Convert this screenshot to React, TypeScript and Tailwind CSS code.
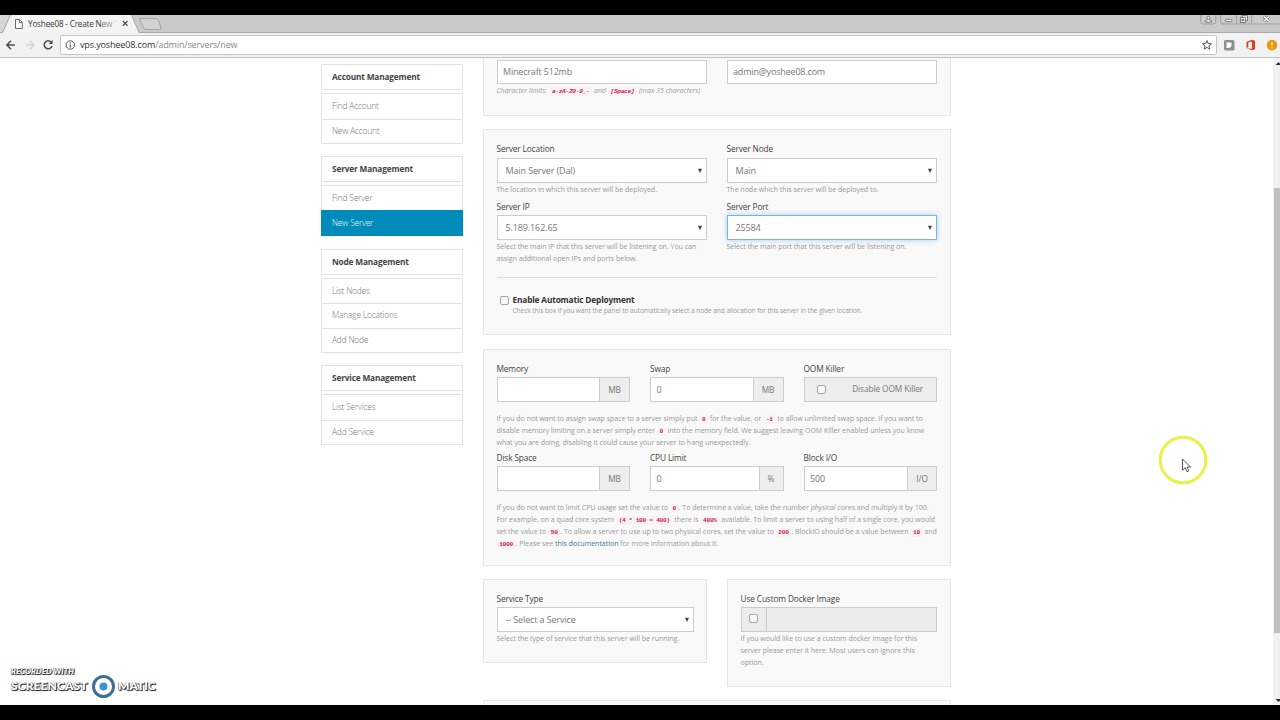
import type { ReactNode } from "react";

const cx = (...c: (string | undefined | false)[]) => c.filter(Boolean).join(" ");

function Chrome() {
  return (
    <header className="shrink-0">
      <div className="relative flex h-[18px] bg-[#cacaca]">
        <svg width="170" height="18" viewBox="0 0 170 18" className="shrink-0">
          <path d="M0 0H10L2 18H0Z" fill="#d6d6d6" />
          <path d="M2.5 18L10.5 0H131.5L139 18Z" fill="#f4f4f4" />
          <path d="M0 17.5H2.5L10.5 0M131.5 0L139 17.5H170" fill="none" stroke="#a9a9a9" />
          <path d="M139.5 3.5H156Q158 3.5 158.6 5.5L161 13Q161.500 14.500 160 14.500H146Q144 14.500 143.200 12.500Z" fill="#d2d2d2" stroke="#a6a6a6" />
          <path d="M15.500 4.500H19.500L22.300 7.300V13.500H15.500ZM19.300 4.500V7.500H22.300" fill="#fff" stroke="#6b6b6b" />
          <path d="M122.800 6L127.500 10.800M127.500 6L122.800 10.800" stroke="#555" strokeWidth="1.300" />
        </svg>
        <div className="absolute left-[28px] top-[2px] whitespace-nowrap text-[8.2px] leading-[13px] tracking-[-0.2px] text-[#3c3c3c]">
          Yoshee08 - Create N<span className="text-[#777]">e</span><span className="text-[#999]">w</span> <span className="text-[#d5d5d5]">'</span>
        </div>
        <div className="grow border-b border-[#a9a9a9]" />
        <svg width="84" height="18" viewBox="0 0 84 18" className="shrink-0 border-b border-[#a9a9a9]">
          <path d="M-1 0V7.500Q-1 9.500 1 9.500H13Q15 9.500 15 7.500V0M20 0V7.500Q20 9.500 22 9.500H84M37 0V9M53 0V9" transform="translate(3.500 0)" fill="none" stroke="#9c9c9c" />
          <g fill="#fff" stroke="#666" strokeWidth=".9">
            <circle cx="10.700" cy="3" r="1.600" />
            <path d="M7.500 7.500V6Q10.700 3.500 14 6V7.500Z" />
            <rect x="28.500" y="4.500" width="7" height="2.500" rx="1" />
            <rect x="46.500" y=".8" width="5.500" height="5" />
            <rect x="44.500" y="2.800" width="5.500" height="5" />
            <rect x="46.300" y="4.600" width="1.800" height="1.500" />
          </g>
          <path d="M68.500 1.500L73.500 6.500M73.500 1.500L68.500 6.500" transform="translate(1 0)" stroke="#666" strokeWidth="3" />
          <path d="M68.500 1.500L73.500 6.500M73.500 1.500L68.500 6.500" transform="translate(1 0)" stroke="#fff" strokeWidth="1.500" />
        </svg>
      </div>
      <div className="flex h-[25px] items-start border-b border-[#c3c3c3] bg-[#f2f2f2]">
        <svg width="60" height="24" viewBox="0 0 60 24" fill="none" strokeWidth="1.500" className="shrink-0">
          <path d="M15 12H7M11 7.800L6.800 12L11 16.200" stroke="#4d4d4d" />
          <path d="M26 12H33.500M30 8L34 12L30 16" stroke="#d0d0d0" />
          <path d="M51.300 9.200A4 4 0 1 0 52 13" stroke="#4d4d4d" />
          <path d="M52.600 7V11H48.600Z" fill="#4d4d4d" />
        </svg>
        <div className="mt-[2px] flex h-[20px] w-[1157px] items-center rounded-[2px] border border-[#c6c6c6] bg-white">
          <svg width="19" height="18" viewBox="0 0 19 18" className="shrink-0" fill="none" stroke="#555">
            <circle cx="9.300" cy="9" r="4.200" />
            <path d="M9.300 8.400V11.400M9.300 6.400V7.400" strokeWidth="1.200" />
          </svg>
          <span className="text-[9px] leading-[16px] tracking-[-0.13px] text-[#8a8a8a]">
            <span className="text-[#333]">vps.yoshee08.com</span>/admin/servers/new
          </span>
          <svg width="12" height="12" viewBox="0 0 12 12" className="ml-auto mr-[3px]" fill="none" stroke="#5a5a5a">
            <path d="M6 1.500L7.200 4.600L10.500 4.800L7.900 6.900L8.800 10.200L6 8.400L3.200 10.200L4.100 6.900L1.500 4.800L4.800 4.600Z" />
          </svg>
        </div>
        <svg width="63" height="24" viewBox="0 0 63 24" className="shrink-0">
          <rect x="7" y="7" width="10.500" height="10.500" rx="1.500" fill="#8e8e8e" />
          <path d="M9.500 9.500H14.500V12.500Q14 15 11 15H9.500Z" fill="#fff" />
          <path d="M29.500 9L35 6.800L38 7.800V16.300L35 17.300L29.500 15.200L35 15.800V8.600L31.300 9.500V14.300L29.500 15Z" fill="#d8401f" />
          <circle cx="55" cy="12" r="5.300" fill="#e8990f" />
          <path d="M55 9V12.500M55 14V15.200" stroke="#fbe7b8" strokeWidth="1.400" />
        </svg>
      </div>
    </header>
  );
}

const groups = [
  { title: "Account Management", items: ["Find Account", "New Account"] },
  { title: "Server Management", items: ["Find Server", "New Server"] },
  { title: "Node Management", items: ["List Nodes", "Manage Locations", "Add Node"] },
  { title: "Service Management", items: ["List Services", "Add Service"] },
];

function Sidebar() {
  return (
    <nav className="flex w-[142px] shrink-0 flex-col gap-[12.300px] pt-[6px]">
      {groups.map((g) => (
        <div key={g.title}>
          <div className="mb-[3px] h-[26px] border border-[#e2e2e2] px-[10px] text-[8.3px] font-bold leading-[24px] tracking-[-0.17px] text-[#444]">
            {g.title}
          </div>
          <div className="flex flex-col border border-[#e2e2e2]">
            {g.items.map((t, i) => (
              <div
                key={t}
                className={cx(
                  "text-[8.4px] font-light tracking-[-0.18px]",
                  t === "New Server"
                    ? "-m-px h-[26.500px] border border-[#008cba] bg-[#008cba] px-[10px] leading-[23.500px] text-[#eef9fd]"
                    : "h-[24.500px] px-[10px] text-[#777]",
                  i > 0 && t !== "New Server" && "border-t border-[#e2e2e2] leading-[22px]",
                  i === 0 && "leading-[23px]",
                )}
              >
                {t}
              </div>
            ))}
          </div>
        </div>
      ))}
    </nav>
  );
}

const Label = ({ children, tight }: { children: ReactNode; tight?: boolean }) => (
  <div
    className={cx(
      "h-[12px] whitespace-nowrap text-[8.3px] leading-[12px] tracking-[-0.13px] text-[#444]",
      tight ? "mb-[2px]" : "mb-[3px]",
    )}
  >
    {children}
  </div>
);

const Line = ({ children, className }: { children?: ReactNode; className?: string }) => (
  <div className={cx("h-[12px] whitespace-nowrap leading-[12px] text-[#999]", className ?? "text-[7.1px] tracking-[-0.055px]")}>
    {children}
  </div>
);

const Code = ({ children }: { children: ReactNode }) => (
  <code className="rounded-[2px] bg-[#f9f2f4] px-[2.700px] py-[1px] font-['Liberation_Mono'] text-[6.2px] font-bold tracking-[-0.3px] text-[#c7254e]">
    {children}
  </code>
);

function Select({ value, focus }: { value: string; focus?: boolean }) {
  return (
    <div
      className={cx(
        "flex h-[25px] items-center justify-between border bg-white pl-[8px] pr-[3px] text-[9px] tracking-[-0.12px] text-[#777]",
        focus ? "border-[#78b3e4] shadow-[0_0_5px_rgba(102,175,233,.6)]" : "border-[#ccc]",
      )}
    >
      {value}
      <svg width="6" height="6" viewBox="0 0 6 6">
        <path d="M1 .8H5L3 5Z" fill="#444" />
      </svg>
    </div>
  );
}

const Input = ({ value }: { value: string }) => (
  <div className="h-[24px] border border-[#ccc] bg-white px-[5.500px] text-[9px] leading-[22px] tracking-[-0.18px] text-[#777]">{value}</div>
);

function Group({ label, value, unit, unitWidth }: { label: string; value: string; unit: string; unitWidth: string }) {
  return (
    <div className="w-[133.500px]">
      <Label tight>{label}</Label>
      <div className="flex h-[25px] border border-[#ccc] bg-white text-[9px] leading-[23px] tracking-[-0.1px] text-[#777]">
        <div className="grow pl-[5.500px]">{value}</div>
        <div className={cx("border-l border-[#ccc] bg-[#eee] text-center text-[8.3px]", unitWidth)}>{unit}</div>
      </div>
    </div>
  );
}

const Box = ({ className }: { className?: string }) => (
  <div className={cx("h-[9px] w-[9px] rounded-[2px] border border-[#a5a5a5] bg-[#f8f8f8]", className)} />
);

const panel = "border border-[#e6e6e6] bg-[#f9f9f9] px-[12.500px]";

function Form() {
  return (
    <main className="flex w-[468px] shrink-0 flex-col">
      <section className={cx(panel, "flex h-[58px] shrink-0 gap-[20px] border-t-0 pt-[2px]")}>
        <div className="w-[210px]">
          <Input value="Minecraft 512mb" />
          <Line className="mt-px text-[7px] italic">
            Character limits: <Code>a-zA-Z0-9_-</Code> and <Code>[Space]</Code> (max 35 characters)
          </Line>
        </div>
        <div className="w-[210px]">
          <Input value="admin@yoshee08.com" />
        </div>
      </section>

      <section className={cx(panel, "mt-[13px] h-[206px] shrink-0 pt-[13px]")}>
        <div className="flex gap-[20px]">
          <div className="w-[210px]">
            <Label>Server Location</Label>
            <Select value="Main Server (Dal)" />
            <Line>The location in which this server will be deployed.</Line>
            <div className="pt-[6px]">
              <Label tight>Server IP</Label>
              <Select value="5.189.162.65" />
              <Line>Select the main IP that this server will be listening on. You can</Line>
              <Line>assign additional open IPs and ports below.</Line>
            </div>
          </div>
          <div className="w-[210px]">
            <Label>Server Node</Label>
            <Select value="Main" />
            <Line>The node which this server will be deployed to.</Line>
            <div className="pt-[6px]">
              <Label tight>Server Port</Label>
              <Select value="25584" focus />
              <Line>Select the main port that this server will be listening on.</Line>
            </div>
          </div>
        </div>
        <hr className="mt-[13px] w-[440px] border-[#ddd]" />
        <div className="mt-[15px] flex">
          <Box className="ml-[3px] mr-[4px] mt-[3px]" />
          <div>
            <div className="h-[12px] text-[8.3px] font-bold leading-[14px] tracking-[-0.16px] text-[#333]">Enable Automatic Deployment</div>
            <Line className="text-[6.6px] tracking-[-0.073px]">
              Check this box if you want the panel to automatically select a node and allocation for this server in the given location.
            </Line>
          </div>
        </div>
      </section>

      <section className={cx(panel, "mt-[14px] h-[217px] shrink-0 pt-[13px]")}>
        <div className="flex gap-[20px]">
          <Group label="Memory" value="" unit="MB" unitWidth="w-[30px]" />
          <Group label="Swap" value="0" unit="MB" unitWidth="w-[30px]" />
          <div className="w-[133.500px]">
            <Label tight>OOM Killer</Label>
            <div className="flex h-[25px] items-center justify-between border border-[#ccc] bg-[#eee] pl-[12.500px] pr-[13px] text-[8.3px] tracking-[-0.1px] text-[#777]">
              <Box />
              Disable OOM Killer
            </div>
          </div>
        </div>
        <div className="mb-[4px] mt-[10px]">
          <Line>If you do not want to assign swap space to a server simply put <Code>0</Code> for the value, or <Code>-1</Code> to allow unlimited swap space. If you want to</Line>
          <Line>disable memory limiting on a server simply enter <Code>0</Code> into the memory field. We suggest leaving OOM Killer enabled unless you know</Line>
          <Line>what you are doing, disabling it could cause your server to hang unexpectedly.</Line>
        </div>
        <div className="flex gap-[20px]">
          <Group label="Disk Space" value="" unit="MB" unitWidth="w-[30px]" />
          <Group label="CPU Limit" value="0" unit="%" unitWidth="w-[24px]" />
          <Group label="Block I/O" value="500" unit="I/O" unitWidth="w-[29px]" />
        </div>
        <div className="mt-[9.500px]">
          <Line>If you do not want to limit CPU usage set the value to <Code>0</Code>. To determine a value, take the number <i>physical</i> cores and multiply it by 100.</Line>
          <Line>For example, on a quad core system <Code>(4 * 100 = 400)</Code> there is <Code>400%</Code> available. To limit a server to using half of a single core, you would</Line>
          <Line>set the value to <Code>50</Code>. To allow a server to use up to two physical cores, set the value to <Code>200</Code>. BlockIO should be a value between <Code>10</Code> and</Line>
          <Line><Code>1000</Code>. Please see <span className="text-[#35809c]">this documentation</span> for more information about it.</Line>
        </div>
      </section>

      <div className="mt-[13px] flex shrink-0 items-start justify-between">
        <section className={cx(panel, "h-[84px] w-[224px] pt-[13px]")}>
          <Label tight>Service Type</Label>
          <Select value="-- Select a Service" />
          <Line>Select the type of service that this server will be running.</Line>
        </section>
        <section className={cx(panel, "h-[108px] w-[224px] pt-[13px]")}>
          <Label tight>Use Custom Docker Image</Label>
          <div className="mr-[1px] flex h-[25px] border border-[#ccc] bg-[#ececec]">
            <div className="w-[25.500px] border-r border-[#ccc] pl-[7.500px] pt-[6px]"><Box /></div>
          </div>
          <Line>If you would like to use a custom docker image for this</Line>
          <Line>server please enter it here. Most users can ignore this</Line>
          <Line>option.</Line>
        </section>
      </div>
      <section className={cx(panel, "mt-[13px] h-[20px] shrink-0")} />
    </main>
  );
}

export default function App() {
  return (
    <div className="relative flex h-[720px] w-[1280px] flex-col overflow-hidden bg-white pt-[15px] font-['Open_Sans','Noto_Sans',sans-serif]">
      <Chrome />
      <div className="flex h-[647px] shrink-0 overflow-hidden pl-[321px]">
        <Sidebar />
        <div className="w-[20px] shrink-0" />
        <Form />
        <div className="ml-auto flex w-[7px] flex-col bg-[#f1f1f1]">
          <svg width="7" height="130" viewBox="0 0 7 130"><path d="M2.500 7L5.500 4L7 5.500V7Z" fill="#333" /></svg>
          <div className="ml-px h-[445px] bg-[#c1c1c1]" />
          <svg width="7" height="72" viewBox="0 0 7 72"><path d="M2.500 66L5.500 69L7 67.500V66Z" fill="#333" /></svg>
        </div>
      </div>
      <div className="h-[15px] shrink-0 bg-black" />
      <div className="absolute inset-x-0 top-0 h-[15px] bg-black" />

      <svg className="absolute left-[1156px] top-[433px]" width="54" height="54" viewBox="0 0 54 54">
        <circle cx="27" cy="27" r="22.800" fill="none" stroke="#eaf04a" strokeWidth="3" />
        <path d="M26.500 26V37.300L29.200 34.700L31 38.700L32.800 37.900L31.100 34H34.500Z" fill="#fff" stroke="#444" strokeWidth=".9" />
      </svg>

      <div className="absolute left-[11px] top-[665px] font-['Lato'] font-black italic text-white [text-shadow:1px_1px_0_#333,0_1px_1px_#555,-.5px_-.5px_0_#888,.5px_0_0_#555]">
        <div className="h-[10px] text-[8px] leading-[12px] tracking-[0.05px]">RECORDED WITH</div>
        <div className="flex h-[22px] items-center text-[12px] not-italic leading-[22px]">
          <span className="w-[80px] tracking-[0.1px]">SCREENCAST</span>
          <svg width="25" height="25" viewBox="0 0 25 25">
            <circle cx="12.500" cy="12.500" r="10" fill="#fff" stroke="#3f6f93" strokeWidth="3" />
            <circle cx="12.500" cy="12.500" r="4" fill="#3e93c8" />
          </svg>
          <span className="ml-[2px]">MATIC</span>
        </div>
      </div>
    </div>
  );
}
